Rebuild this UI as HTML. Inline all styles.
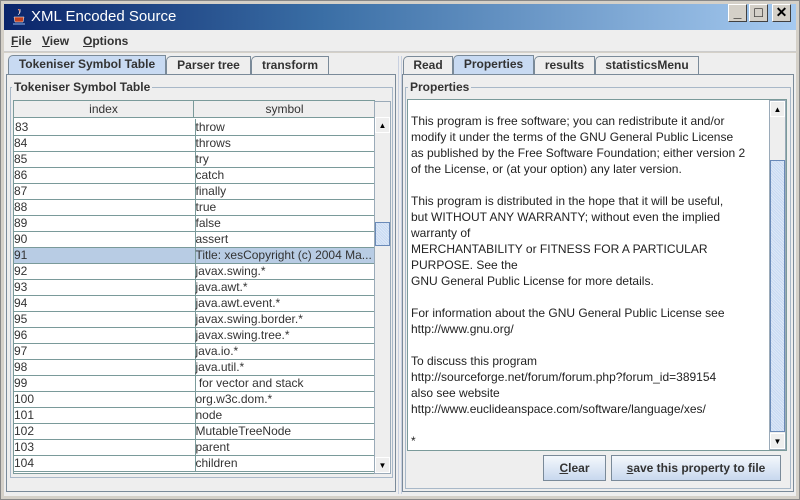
<!DOCTYPE html>
<html><head><style>
*{box-sizing:border-box;margin:0;padding:0}
body{width:800px;height:500px;background:#c0c0c0;font-family:"Liberation Sans",sans-serif;font-size:12px;color:#333;position:relative;overflow:hidden}
.a{position:absolute}
.win{left:0;top:0;width:800px;height:500px;background:#d4d0c8;border:1px solid #888}
.title{left:4px;top:4px;width:792px;height:26px;background:linear-gradient(90deg,#0a246a,#3a6ea5 40%,#a6caf0)}
.title span{position:absolute;left:27px;top:4px;color:#fff;font-size:15px}
.tb{top:4px;width:19px;height:18px;background:#d4d0c8;border:1px solid;border-color:#fff #404040 #404040 #fff;font-size:14px;text-align:center;line-height:15px;color:#000;font-weight:bold}
.menu{left:4px;top:30px;width:792px;height:22px;background:#eeeeee;border-bottom:1px solid #ccc}
.menu b{position:absolute;top:4px;font-size:12px;color:#333}
.body{left:4px;top:53px;width:792px;height:443px;background:#eeeeee}
.tab{height:19px;border:1px solid #7a8a99;border-bottom:none;border-radius:5px 0 0 0;background:#eeeeee;font-weight:bold;font-size:12px;text-align:center;line-height:17px;color:#333}
.tab.sel{background:#c8daf2;height:20px}
.panel{border:1px solid #7a8a99;background:#eeeeee}
.tborder{border:1px solid #a8b8c8}
.lg{background:#eeeeee;font-weight:bold;padding:0 2px;font-size:12px}
.row{height:16px;border-bottom:1px solid #7a9a9a;font-size:12px;line-height:16px;white-space:nowrap;overflow:hidden}
.row div{position:absolute;top:0;height:16px;padding-left:1px}
.sb{background:#eeeeee;border:1px solid #9aaab8}
.arr{width:15px;height:16px;background:#eeeeee;border:1px solid #fff;font-size:8px;text-align:center;line-height:15px;color:#000}
.thumb{background:repeating-linear-gradient(45deg,#c8daf2 0 1px,#dde8f8 1px 2px);border:1px solid #6a8ab8}
.txt div{height:16px;line-height:16px;font-size:12px;color:#222;white-space:nowrap}
.btn{height:26px;border:1px solid #7a8a99;background:linear-gradient(#f4f8fc,#c8d8ee);font-weight:bold;font-size:12px;text-align:center;line-height:24px;color:#333}
</style></head><body>
<div class="a win"></div>
<div class="a title"><span>XML Encoded Source</span>
<svg class="a" style="left:6px;top:3px" width="18" height="20"><path d="M8 2q3 3 0 6q3-2 2-6M4 10h10l-1 5h-8z" fill="#c04020" stroke="#fff" stroke-width=".5"/><rect x="3" y="16" width="12" height="2" fill="#5070b0"/></svg></div>
<div class="a tb" style="left:728px">_</div>
<div class="a tb" style="left:749px;font-weight:normal">□</div>
<div class="a tb" style="left:772px">✕</div>
<div class="a menu"><b style="left:7px"><u>F</u>ile</b><b style="left:38px"><u>V</u>iew</b><b style="left:79px"><u>O</u>ptions</b></div>
<div class="a body"></div>

<!-- left tabs -->
<div class="a tab sel" style="left:8px;top:55px;width:158px">Tokeniser Symbol Table</div>
<div class="a tab" style="left:166px;top:56px;width:85px">Parser tree</div>
<div class="a tab" style="left:251px;top:56px;width:78px">transform</div>
<div class="a panel" style="left:6px;top:74px;width:390px;height:418px"></div>
<div class="a tborder" style="left:10px;top:87px;width:383px;height:391px"></div>
<div class="a lg" style="left:12px;top:80px">Tokeniser Symbol Table</div>
<div class="a" style="left:13px;top:100px;width:362px;height:374px;background:#fff;border:1px solid #7a9a9a"></div>
<div class="a" style="left:14px;top:101px;width:360px;height:17px;background:#eeeeee;border-bottom:1px solid #7a9a9a"></div>
<div class="a" style="left:14px;top:101px;width:180px;height:17px;border-right:1px solid #7a9a9a;text-align:center;line-height:17px">index</div>
<div class="a" style="left:195px;top:101px;width:179px;height:17px;text-align:center;line-height:17px">symbol</div>
<div class="a" id="rows" style="left:14px;top:119px;width:360px">
</div>
<div class="a sb" style="left:374px;top:101px;width:17px;height:373px"></div>
<div class="a arr" style="left:375px;top:117px">▲</div>
<div class="a arr" style="left:375px;top:457px">▼</div>
<div class="a thumb" style="left:375px;top:222px;width:15px;height:24px"></div>

<!-- splitter -->
<div class="a" style="left:396px;top:56px;width:8px;height:438px;background:repeating-linear-gradient(90deg,#eeeeee 0 2px,#c8d0e0 2px 3px)"></div>

<!-- right tabs -->
<div class="a tab" style="left:403px;top:56px;width:50px">Read</div>
<div class="a tab sel" style="left:453px;top:55px;width:81px">Properties</div>
<div class="a tab" style="left:534px;top:56px;width:61px">results</div>
<div class="a tab" style="left:595px;top:56px;width:104px">statisticsMenu</div>
<div class="a panel" style="left:402px;top:74px;width:392px;height:418px"></div>
<div class="a tborder" style="left:405px;top:87px;width:386px;height:402px"></div>
<div class="a lg" style="left:408px;top:80px">Properties</div>
<div class="a" style="left:407px;top:99px;width:380px;height:352px;background:#fff;border:1px solid #7a9a9a"></div>
<div class="a txt" style="left:411px;top:113px">
<div>This program is free software; you can redistribute it and/or</div>
<div>modify it under the terms of the GNU General Public License</div>
<div>as published by the Free Software Foundation; either version 2</div>
<div>of the License, or (at your option) any later version.</div>
<div></div>
<div>This program is distributed in the hope that it will be useful,</div>
<div>but WITHOUT ANY WARRANTY; without even the implied</div>
<div>warranty of</div>
<div>MERCHANTABILITY or FITNESS FOR A PARTICULAR</div>
<div>PURPOSE. See the</div>
<div>GNU General Public License for more details.</div>
<div></div>
<div>For information about the GNU General Public License see</div>
<div>http://www.gnu.org/</div>
<div></div>
<div>To discuss this program</div>
<div>http://sourceforge.net/forum/forum.php?forum_id=389154</div>
<div>also see website</div>
<div>http://www.euclideanspace.com/software/language/xes/</div>
<div></div>
<div>*</div>
</div>
<div class="a sb" style="left:769px;top:100px;width:17px;height:350px"></div>
<div class="a arr" style="left:770px;top:101px">▲</div>
<div class="a arr" style="left:770px;top:433px">▼</div>
<div class="a thumb" style="left:770px;top:160px;width:15px;height:272px"></div>
<div class="a btn" style="left:543px;top:455px;width:63px"><u>C</u>lear</div>
<div class="a btn" style="left:611px;top:455px;width:170px"><u>s</u>ave this property to file</div>

<div class="a" style="left:14px;top:119px;width:360px">
<div class="row a" style="top:0;width:360px"><div style="left:0">83</div><div style="left:181px;border-left:1px solid #7a9a9a">throw</div></div>
</div>
<script></script>
<div class="a" style="left:14px;top:119px;width:360px;height:354px;overflow:hidden">
<table style="border-collapse:collapse;width:360px;font-size:12px;background:#fff">
<tr style="height:16px"><td style="width:181px;border:1px solid #7a9a9a;border-top:none;border-left:none;padding-left:1px">83</td><td style="border-bottom:1px solid #7a9a9a">throw</td></tr>
<tr style="height:16px"><td style="border-right:1px solid #7a9a9a;border-bottom:1px solid #7a9a9a">84</td><td style="border-bottom:1px solid #7a9a9a">throws</td></tr>
<tr style="height:16px"><td style="border-right:1px solid #7a9a9a;border-bottom:1px solid #7a9a9a">85</td><td style="border-bottom:1px solid #7a9a9a">try</td></tr>
<tr style="height:16px"><td style="border-right:1px solid #7a9a9a;border-bottom:1px solid #7a9a9a">86</td><td style="border-bottom:1px solid #7a9a9a">catch</td></tr>
<tr style="height:16px"><td style="border-right:1px solid #7a9a9a;border-bottom:1px solid #7a9a9a">87</td><td style="border-bottom:1px solid #7a9a9a">finally</td></tr>
<tr style="height:16px"><td style="border-right:1px solid #7a9a9a;border-bottom:1px solid #7a9a9a">88</td><td style="border-bottom:1px solid #7a9a9a">true</td></tr>
<tr style="height:16px"><td style="border-right:1px solid #7a9a9a;border-bottom:1px solid #7a9a9a">89</td><td style="border-bottom:1px solid #7a9a9a">false</td></tr>
<tr style="height:16px"><td style="border-right:1px solid #7a9a9a;border-bottom:1px solid #7a9a9a">90</td><td style="border-bottom:1px solid #7a9a9a">assert</td></tr>
<tr style="height:16px;background:#b8cce4"><td style="border-right:1px solid #7a9a9a;border-bottom:1px solid #7a9a9a">91</td><td style="border-bottom:1px solid #7a9a9a;white-space:nowrap">Title: xesCopyright (c) 2004 Ma...</td></tr>
<tr style="height:16px"><td style="border-right:1px solid #7a9a9a;border-bottom:1px solid #7a9a9a">92</td><td style="border-bottom:1px solid #7a9a9a">javax.swing.*</td></tr>
<tr style="height:16px"><td style="border-right:1px solid #7a9a9a;border-bottom:1px solid #7a9a9a">93</td><td style="border-bottom:1px solid #7a9a9a">java.awt.*</td></tr>
<tr style="height:16px"><td style="border-right:1px solid #7a9a9a;border-bottom:1px solid #7a9a9a">94</td><td style="border-bottom:1px solid #7a9a9a">java.awt.event.*</td></tr>
<tr style="height:16px"><td style="border-right:1px solid #7a9a9a;border-bottom:1px solid #7a9a9a">95</td><td style="border-bottom:1px solid #7a9a9a">javax.swing.border.*</td></tr>
<tr style="height:16px"><td style="border-right:1px solid #7a9a9a;border-bottom:1px solid #7a9a9a">96</td><td style="border-bottom:1px solid #7a9a9a">javax.swing.tree.*</td></tr>
<tr style="height:16px"><td style="border-right:1px solid #7a9a9a;border-bottom:1px solid #7a9a9a">97</td><td style="border-bottom:1px solid #7a9a9a">java.io.*</td></tr>
<tr style="height:16px"><td style="border-right:1px solid #7a9a9a;border-bottom:1px solid #7a9a9a">98</td><td style="border-bottom:1px solid #7a9a9a">java.util.*</td></tr>
<tr style="height:16px"><td style="border-right:1px solid #7a9a9a;border-bottom:1px solid #7a9a9a">99</td><td style="border-bottom:1px solid #7a9a9a">&nbsp;for vector and stack</td></tr>
<tr style="height:16px"><td style="border-right:1px solid #7a9a9a;border-bottom:1px solid #7a9a9a">100</td><td style="border-bottom:1px solid #7a9a9a">org.w3c.dom.*</td></tr>
<tr style="height:16px"><td style="border-right:1px solid #7a9a9a;border-bottom:1px solid #7a9a9a">101</td><td style="border-bottom:1px solid #7a9a9a">node</td></tr>
<tr style="height:16px"><td style="border-right:1px solid #7a9a9a;border-bottom:1px solid #7a9a9a">102</td><td style="border-bottom:1px solid #7a9a9a">MutableTreeNode</td></tr>
<tr style="height:16px"><td style="border-right:1px solid #7a9a9a;border-bottom:1px solid #7a9a9a">103</td><td style="border-bottom:1px solid #7a9a9a">parent</td></tr>
<tr style="height:16px"><td style="border-right:1px solid #7a9a9a;border-bottom:1px solid #7a9a9a">104</td><td style="border-bottom:1px solid #7a9a9a">children</td></tr>
</table>
</div>
</body></html>
